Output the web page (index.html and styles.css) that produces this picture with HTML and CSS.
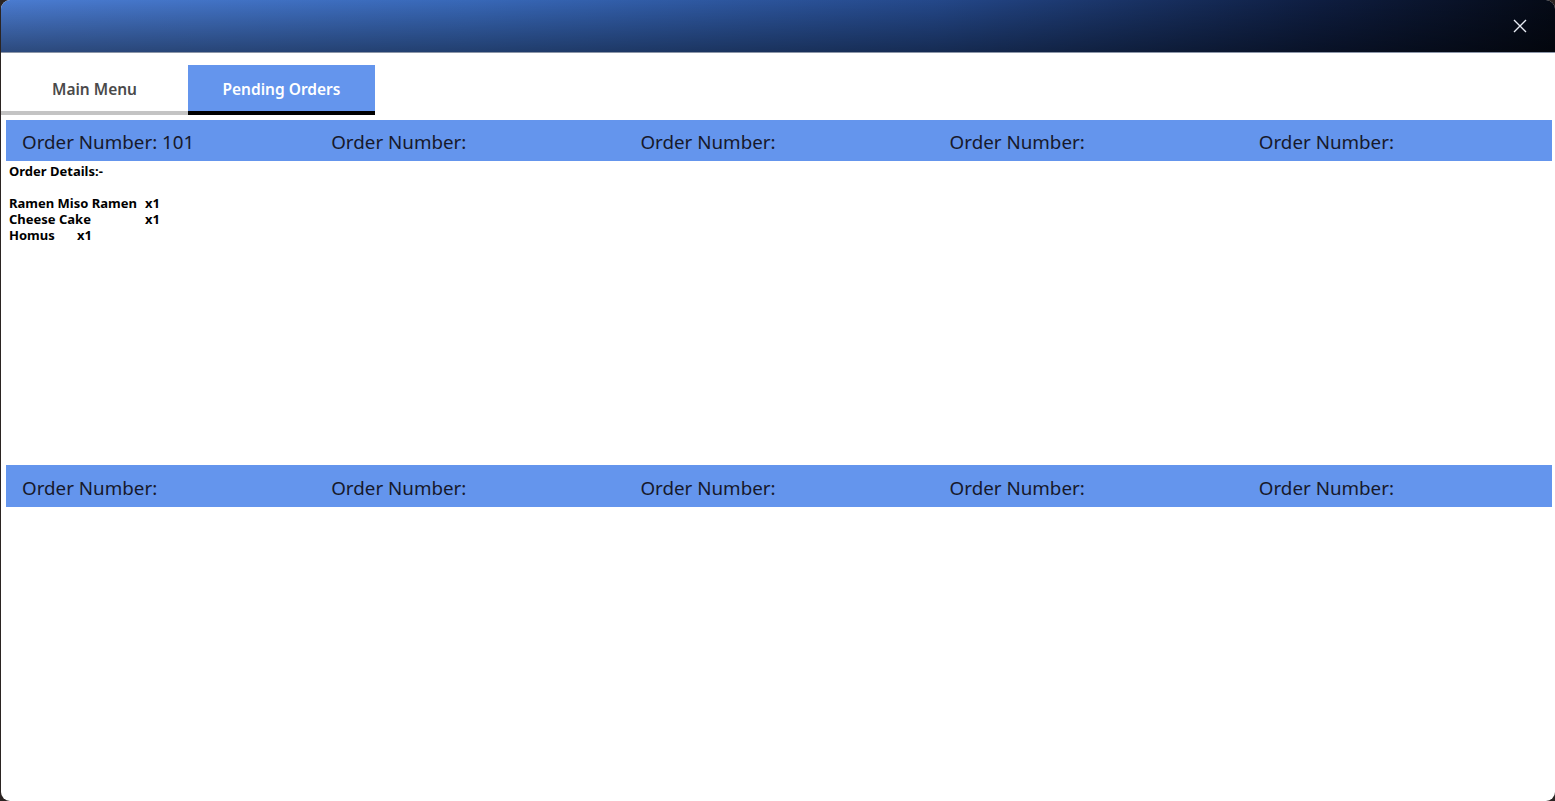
FILE: index.html
```html
<!DOCTYPE html>
<html>
<head>
<meta charset="utf-8">
<link rel="stylesheet" href="styles.css">
</head>
<body>
<div class="window">
  <div class="titlebar">
    <button class="close" aria-label="Close">
      <svg width="14" height="14" viewBox="0 0 14 14"><path d="M1 1 L13 13 M13 1 L1 13" stroke="#e8ecf4" stroke-width="1.4" fill="none"/></svg>
    </button>
  </div>
  <div class="tabs">
    <div class="tab">Main Menu</div>
    <div class="tab active">Pending Orders</div>
  </div>
  <div class="orders">
    <div class="order-row">
      <div class="order-header">
        <div class="col">Order Number: 101</div>
        <div class="col">Order Number:</div>
        <div class="col">Order Number:</div>
        <div class="col">Order Number:</div>
        <div class="col">Order Number:</div>
      </div>
      <div class="order-body">
        <div class="details">
          <div class="details-title">Order Details:-</div>
          <div class="items">Ramen Miso Ramen	x1
Cheese Cake	x1
Homus	x1</div>
        </div>
      </div>
    </div>
    <div class="order-row">
      <div class="order-header">
        <div class="col">Order Number:</div>
        <div class="col">Order Number:</div>
        <div class="col">Order Number:</div>
        <div class="col">Order Number:</div>
        <div class="col">Order Number:</div>
      </div>
      <div class="order-body"></div>
    </div>
  </div>
</div>
</body>
</html>
```

FILE: styles.css
```css
html, body {
  margin: 0;
  padding: 0;
  height: 100%;
}
body {
  background: #2b2422;
  font-family: "Noto Sans", "Open Sans", sans-serif;
  overflow: hidden;
}
.window {
  height: 801px;
  margin-left: 1px;
  background: #ffffff;
  border-radius: 9px;
  overflow: hidden;
  display: flex;
  flex-direction: column;
}
.titlebar {
  height: 52px;
  flex: none;
  border-bottom: 1px solid #8c96a8;
  background:
    linear-gradient(to bottom, rgba(0,0,0,0) 0%, rgba(0,0,0,0.4) 100%),
    linear-gradient(to right, #4a7bd0 0%, #3868b8 30%, #24488a 60%, #0e1d40 85%, #050a16 100%);
  display: flex;
  align-items: center;
  justify-content: flex-end;
  padding-right: 28px;
}
.close {
  background: none;
  border: 0;
  padding: 0;
  width: 14px;
  height: 14px;
  display: flex;
}
.tabs {
  display: flex;
  margin-top: 12px;
  height: 50px;
  flex: none;
}
.tab {
  width: 187px;
  box-sizing: border-box;
  display: flex;
  align-items: center;
  justify-content: center;
  font-size: 15.5px;
  font-weight: 600;
  color: #4a4a4a;
  border-bottom: 4px solid #c4c4c4;
  padding-top: 1px;
}
.tab.active {
  background: #6495ed;
  color: #ffffff;
  border-bottom-color: #000000;
}
.orders {
  padding: 5px 3px 0 5px;
  display: flex;
  flex-direction: column;
}
.order-row {
  display: flex;
  flex-direction: column;
}
.order-header {
  height: 41px;
  background: #6495ed;
  display: grid;
  grid-template-columns: repeat(5, 1fr);
  align-items: center;
}
.order-row + .order-row .order-header {
  height: 42px;
}
.col {
  padding-left: 16px;
  font-size: 18.8px;
  color: #17192b;
  padding-top: 3px;
}
.order-body {
  height: 304px;
}
.details {
  padding: 2px 0 0 3px;
  font-size: 13px;
  font-weight: 700;
  color: #000;
  line-height: 16.3px;
}
.details-title {
  margin-bottom: 15.5px;
}
.items {
  white-space: pre;
  tab-size: 68px;
  -moz-tab-size: 68px;
}
```
